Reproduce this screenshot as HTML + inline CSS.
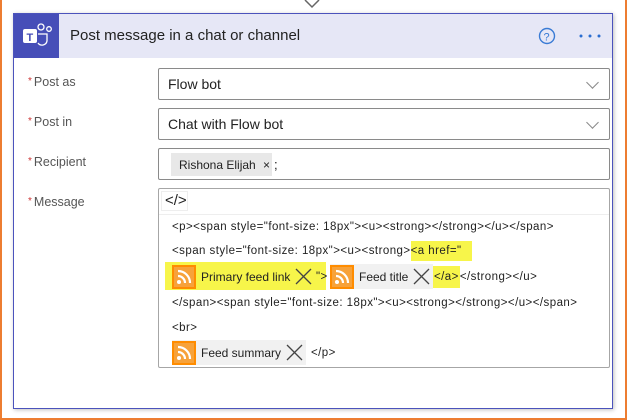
<!DOCTYPE html>
<html><head><style>
*{margin:0;padding:0;box-sizing:border-box}
body{width:627px;height:420px;background:#fff;font-family:"Liberation Sans",sans-serif;position:relative;overflow:hidden}
.outer{position:absolute;left:0;top:0;width:627px;height:420px;border:2px solid #ed7d31;border-top:none}
.card{position:absolute;left:13px;top:13px;width:600px;height:396px;border:1.5px solid #4b53bc;background:#fff;box-shadow:1px 1px 4px rgba(0,0,0,.25)}
.hdr{position:absolute;left:0;top:0;right:0;height:44px;background:#e6e7f6}
.ico{position:absolute;left:0;top:0;width:45px;height:44px;background:#464eb8}
.title{position:absolute;left:56px;top:13px;font-size:15px;color:#222}
.lbl{position:absolute;left:14px;font-size:12.5px;color:#555}
.lbl b{color:#c33;font-weight:normal;font-size:10px;vertical-align:2px;margin-right:2px}
.fld{position:absolute;left:144px;width:452px;border:1px solid #8a8a8a;border-radius:2px;font-size:14px;color:#222}
.chev{position:absolute;right:12px;top:9px;width:9px;height:9px;border-right:1px solid #888;border-bottom:1px solid #888;transform:rotate(45deg)}
.t{position:absolute;left:13px;font-size:11.5px;letter-spacing:0.45px;color:#222;white-space:nowrap}
.hl{background:#f7f54a}
.tok{position:absolute;height:25px;background:#f1f1f1;font-size:12px;color:#222;display:flex;align-items:center;white-space:nowrap;padding-right:3px}
.rss{width:24px;height:24px;border:2px solid #ff8c00;background:#f7a23a;position:relative;margin-right:5px;flex:none}
.x{margin-left:5px;flex:none}
</style></head><body>
<div class="outer"></div>
<svg style="position:absolute;left:302px;top:0" width="20" height="10"><path d="M3 0 L10 7 L17 0" stroke="#666" stroke-width="1.5" fill="none"/></svg>
<div class="card">
 <div class="hdr">
  <div class="ico"><svg width="45" height="44"><rect x="9" y="15" width="14" height="14" rx="2" fill="#fff"/><text x="12.5" y="27" font-size="11" font-weight="bold" fill="#464eb8" font-family="Liberation Sans">T</text><circle cx="27" cy="13" r="3" fill="none" stroke="#fff" stroke-width="1.3"/><circle cx="35" cy="15" r="2.3" fill="none" stroke="#fff" stroke-width="1.3"/><path d="M24 20h9v7a5 5 0 0 1-9 2" fill="none" stroke="#fff" stroke-width="1.3"/></svg></div>
  <div class="title">Post message in a chat or channel</div>
  <svg style="position:absolute;left:524px;top:13px" width="18" height="18"><circle cx="9" cy="9" r="7.5" fill="none" stroke="#3a7bd5" stroke-width="1.4"/><text x="5.5" y="13.5" font-size="11" fill="#3a7bd5" font-family="Liberation Sans">?</text></svg>
  <svg style="position:absolute;left:564px;top:19px" width="24" height="6"><circle cx="3" cy="3" r="1.5" fill="#2a6dd0"/><circle cx="12" cy="3" r="1.5" fill="#2a6dd0"/><circle cx="21" cy="3" r="1.5" fill="#2a6dd0"/></svg>
 </div>
 <div class="lbl" style="top:61px"><b>*</b>Post as</div>
 <div class="fld" style="top:54px;height:32px;padding:7px 0 0 9px">Flow bot<div class="chev"></div></div>
 <div class="lbl" style="top:101px"><b>*</b>Post in</div>
 <div class="fld" style="top:94px;height:32px;padding:7px 0 0 9px">Chat with Flow bot<div class="chev"></div></div>
 <div class="lbl" style="top:141px"><b>*</b>Recipient</div>
 <div class="fld" style="top:134px;height:32px">
  <div style="position:absolute;left:12px;top:4px;width:101px;height:23px;background:#e8e8e8;font-size:12px;padding:5px 0 0 8px">Rishona Elijah <span style="font-size:12px;margin-left:4px">×</span></div>
  <span style="position:absolute;left:115px;top:8px;font-size:13px">;</span>
 </div>
 <div class="lbl" style="top:181px"><b>*</b>Message</div>
 <div class="fld" style="top:174px;height:180px;border-color:#a6a6a6">
  <div style="position:absolute;left:2px;top:2px;width:27px;height:20px;background:#fff;border:1px solid #eee;font-size:15px;padding:0 0 0 3px">&lt;/&gt;</div>
  <div style="position:absolute;left:0;right:0;top:25px;border-top:1px solid #eee"></div>
  <div class="t" style="top:32px">&lt;p&gt;&lt;span style="font-size: 18px"&gt;&lt;u&gt;&lt;strong&gt;&lt;/strong&gt;&lt;/u&gt;&lt;/span&gt;</div>
  <div class="t" style="top:56px">&lt;span style="font-size: 18px"&gt;&lt;u&gt;&lt;strong&gt;<span class="hl" style="padding:4px 10px 4px 0">&lt;a href="</span></div>
  <div style="position:absolute;left:6px;top:73px;width:161px;height:28px;background:#f7f54a"></div>
  <div class="tok" style="left:13px;top:75px;background:transparent"><div class="rss"><svg width="20" height="20"><circle cx="5" cy="15" r="2" fill="#fff"/><path d="M4 9a7 7 0 0 1 7 7M4 4a12 12 0 0 1 12 12" stroke="#fff" stroke-width="2.2" fill="none"/></svg></div>Primary feed link<svg class="x" width="17" height="17"><path d="M1 1L16 16M16 1L1 16" stroke="#444" stroke-width="1.3"/></svg></div>
  <span class="t" style="left:157px;top:82px">"&gt;</span>
  <div class="tok" style="left:171px;top:75px"><div class="rss"><svg width="20" height="20"><circle cx="5" cy="15" r="2" fill="#fff"/><path d="M4 9a7 7 0 0 1 7 7M4 4a12 12 0 0 1 12 12" stroke="#fff" stroke-width="2.2" fill="none"/></svg></div>Feed title<svg class="x" width="17" height="17"><path d="M1 1L16 16M16 1L1 16" stroke="#444" stroke-width="1.3"/></svg></div>
  <div class="t" style="left:274px;top:82px"><span class="hl" style="padding:5px 1px">&lt;/a&gt;</span>&lt;/strong&gt;&lt;/u&gt;</div>
  <div class="t" style="top:108px">&lt;/span&gt;&lt;span style="font-size: 18px"&gt;&lt;u&gt;&lt;strong&gt;&lt;/strong&gt;&lt;/u&gt;&lt;/span&gt;</div>
  <div class="t" style="top:133px">&lt;br&gt;</div>
  <div class="tok" style="left:13px;top:151px"><div class="rss"><svg width="20" height="20"><circle cx="5" cy="15" r="2" fill="#fff"/><path d="M4 9a7 7 0 0 1 7 7M4 4a12 12 0 0 1 12 12" stroke="#fff" stroke-width="2.2" fill="none"/></svg></div>Feed summary<svg class="x" width="17" height="17"><path d="M1 1L16 16M16 1L1 16" stroke="#444" stroke-width="1.3"/></svg></div>
  <span class="t" style="left:152px;top:158px">&lt;/p&gt;</span>
 </div>
</div>
</body></html>
